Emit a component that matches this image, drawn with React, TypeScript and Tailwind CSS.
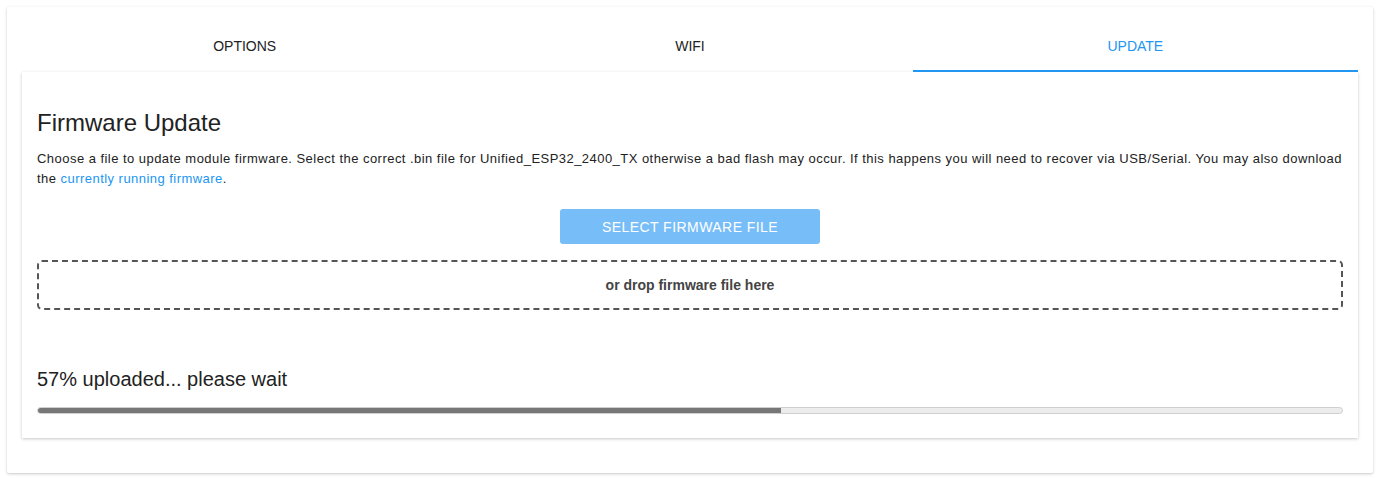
import React from 'react';

const tabs = ['OPTIONS', 'WIFI', 'UPDATE'];

export default function App() {
  const active = 2;
  const progress = 57;

  return (
    <div className="min-h-screen bg-white p-[7px] font-['Liberation_Sans',Arial,sans-serif] text-[#222]">
      <div className="bg-white px-[15px] pt-[15px] pb-[35px] shadow-[0_1px_3px_rgba(0,0,0,0.22)] rounded-[2px]">
        {/* Tabs */}
        <div className="flex h-[50px]">
          {tabs.map((t, i) => (
            <div
              key={t}
              className={`relative flex-1 flex items-center justify-center text-[14px] ${
                i === active ? 'text-[#2196f3]' : 'text-[#222]'
              }`}
            >
              <span className="-mt-[1px]">{t}</span>
              {i === active && (
                <div className="absolute left-0 right-0 bottom-0 h-[2px] bg-[#2196f3]" />
              )}
            </div>
          ))}
        </div>

        {/* Update card */}
        <div className="bg-white px-[15px] pt-[35px] pb-[24px] shadow-[0_1px_3px_rgba(0,0,0,0.22)]">
          <h2 className="text-[24px] leading-[32px] text-[#222]">Firmware Update</h2>
          <p className="mt-[10px] text-[13px] leading-[20px] tracking-[0.46px] text-[#222]">
            Choose a file to update module firmware. Select the correct .bin file for Unified_ESP32_2400_TX
            otherwise a bad flash may occur. If this happens you will need to recover via USB/Serial. You may
            also download the <a className="text-[#2196f3]">currently running firmware</a>.
          </p>

          <div className="mt-[20px] flex justify-center">
            <button className="w-[260px] h-[35px] pt-[1px] rounded-[3px] bg-[#77bdf8] text-white text-[14px] font-medium tracking-[0.45px]">
              SELECT FIRMWARE FILE
            </button>
          </div>

          <div className="mt-[16px] h-[50px] pt-[1px] rounded-[5px] border-2 border-dashed border-[#555] flex items-center justify-center text-[14px] font-bold text-[#444]">
            or drop firmware file here
          </div>

          <div className="mt-[55px] text-[20px] leading-[28px] text-[#222]">
            {progress}% uploaded... please wait
          </div>

          <div className="mt-[14px] h-[7px] rounded-full bg-[#ececec] border border-[#cfcfcf] overflow-hidden">
            <div className="h-full bg-[#777]" style={{ width: `${progress}%` }} />
          </div>
        </div>
      </div>
    </div>
  );
}
